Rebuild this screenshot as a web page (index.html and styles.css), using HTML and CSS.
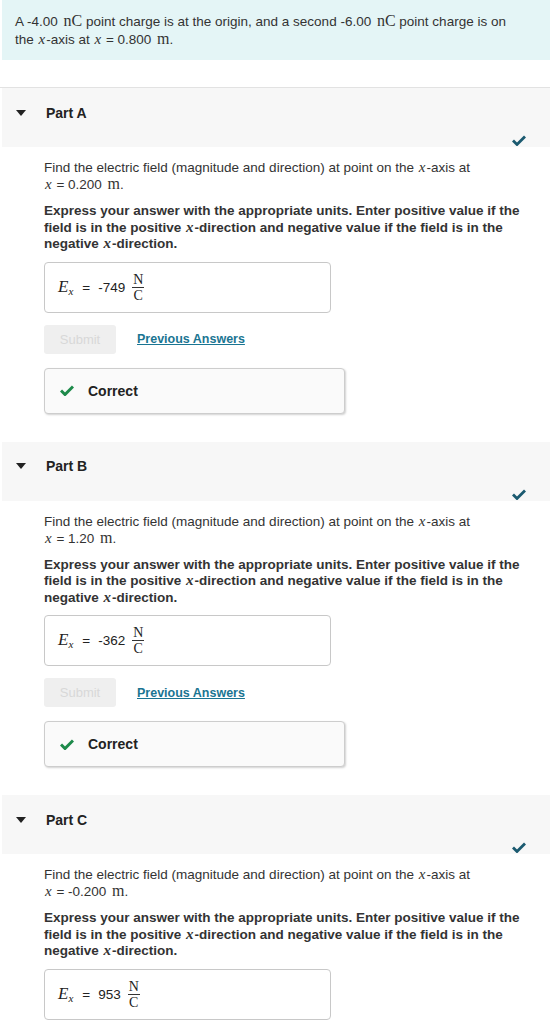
FILE: index.html
```html
<!DOCTYPE html>
<html lang="en">
<head>
  <meta charset="UTF-8" />
  <meta name="viewport" content="width=device-width, initial-scale=1.0" />
  <title>Point charges - electric field</title>
  <link rel="stylesheet" href="styles.css">
</head>
<body>

  <div class="intro">
    A -4.00 <span class="m">nC</span> point charge is at the origin, and a second -6.00 <span class="m">nC</span> point charge is on the <i class="v">x</i>-axis at <span class="nw"><i class="v">x</i> = 0.800 <span class="m">m</span>.</span>
  </div>

  <div class="parts">

    <section class="part">
      <div class="part-head">
        <svg class="caret" width="10" height="6" viewBox="0 0 10 6"><path d="M0 0H10L5 6Z" fill="#222"/></svg>
        <span class="part-title">Part A</span>
        <svg class="done" width="14" height="11" viewBox="0 0 14 11"><path d="M1 5.5L5 9.5L13 1.5" fill="none" stroke="#1b5a70" stroke-width="2.8"/></svg>
      </div>
      <div class="part-body">
        <p class="q">Find the electric field (magnitude and direction) at point on the <i class="v">x</i>-axis at <span class="nw"><i class="v">x</i> = 0.200 <span class="m">m</span>.</span></p>
        <p class="hint">Express your answer with the appropriate units. Enter positive value if the field is in the positive <i class="v">x</i>-direction and negative value if the field is in the negative <i class="v">x</i>-direction.</p>
        <div class="answer">
          <i class="v big">E<sub>x</sub></i> <span class="eq">=</span> -749
          <span class="frac"><span>N</span><span>C</span></span>
        </div>
        <div class="actions">
          <button class="submit" disabled>Submit</button>
          <a class="prev" href="#">Previous Answers</a>
        </div>
        <div class="result">
          <svg width="14" height="11" viewBox="0 0 14 11"><path d="M1 5.5L5 9.5L13 1.5" fill="none" stroke="#1d8a4a" stroke-width="3"/></svg>
          <span>Correct</span>
        </div>
      </div>
    </section>

    <section class="part">
      <div class="part-head">
        <svg class="caret" width="10" height="6" viewBox="0 0 10 6"><path d="M0 0H10L5 6Z" fill="#222"/></svg>
        <span class="part-title">Part B</span>
        <svg class="done" width="14" height="11" viewBox="0 0 14 11"><path d="M1 5.5L5 9.5L13 1.5" fill="none" stroke="#1b5a70" stroke-width="2.8"/></svg>
      </div>
      <div class="part-body">
        <p class="q">Find the electric field (magnitude and direction) at point on the <i class="v">x</i>-axis at <span class="nw"><i class="v">x</i> = 1.20 <span class="m">m</span>.</span></p>
        <p class="hint">Express your answer with the appropriate units. Enter positive value if the field is in the positive <i class="v">x</i>-direction and negative value if the field is in the negative <i class="v">x</i>-direction.</p>
        <div class="answer">
          <i class="v big">E<sub>x</sub></i> <span class="eq">=</span> -362
          <span class="frac"><span>N</span><span>C</span></span>
        </div>
        <div class="actions">
          <button class="submit" disabled>Submit</button>
          <a class="prev" href="#">Previous Answers</a>
        </div>
        <div class="result">
          <svg width="14" height="11" viewBox="0 0 14 11"><path d="M1 5.5L5 9.5L13 1.5" fill="none" stroke="#1d8a4a" stroke-width="3"/></svg>
          <span>Correct</span>
        </div>
      </div>
    </section>

    <section class="part">
      <div class="part-head">
        <svg class="caret" width="10" height="6" viewBox="0 0 10 6"><path d="M0 0H10L5 6Z" fill="#222"/></svg>
        <span class="part-title">Part C</span>
        <svg class="done" width="14" height="11" viewBox="0 0 14 11"><path d="M1 5.5L5 9.5L13 1.5" fill="none" stroke="#1b5a70" stroke-width="2.8"/></svg>
      </div>
      <div class="part-body">
        <p class="q">Find the electric field (magnitude and direction) at point on the <i class="v">x</i>-axis at <span class="nw"><i class="v">x</i> = -0.200 <span class="m">m</span>.</span></p>
        <p class="hint">Express your answer with the appropriate units. Enter positive value if the field is in the positive <i class="v">x</i>-direction and negative value if the field is in the negative <i class="v">x</i>-direction.</p>
        <div class="answer">
          <i class="v big">E<sub>x</sub></i> <span class="eq">=</span> 953
          <span class="frac"><span>N</span><span>C</span></span>
        </div>
      </div>
    </section>

  </div>

</body>
</html>
```

FILE: styles.css
```css
* {
  box-sizing: border-box;
  margin: 0;
  padding: 0;
}

body {
  font-family: 'Liberation Sans', Arial, sans-serif;
  font-size: 13.5px;
  color: #333;
  background: #fff;
}

.nw {
  white-space: nowrap;
}

.intro {
  margin-left: 2px;
  background: #e4f5f6;
  padding: 13px 40px 11px 13px;
  line-height: 18px;
  height: 60px;
}

.m {
  font-family: 'Liberation Serif', 'Times New Roman', serif;
  font-size: 16px;
  line-height: 1;
  margin-left: 2px;
}

.v {
  font-family: 'Liberation Serif', 'Times New Roman', serif;
  font-style: italic;
  font-size: 15px;
  line-height: 1;
  margin: 0 1px 0 1px;
}

.parts {
  margin-top: 27px;
  border-top: 1px solid #e2e2e2;
}

.part-head {
  position: relative;
  margin-left: 2px;
  height: 59px;
  background: #f7f7f7;
  display: flex;
  align-items: center;
  padding-left: 14px;
  padding-bottom: 10px;
}

.caret {
  margin-right: 20px;
}

.part-title {
  font-size: 14px;
  font-weight: bold;
  color: #222;
}

.done {
  position: absolute;
  right: 24px;
  bottom: 1px;
}

.part-body {
  padding: 12px 24px 28px 44px;
}

.q {
  line-height: 17px;
}

.hint {
  margin-top: 10px;
  font-weight: bold;
  line-height: 16.5px;
}

.answer {
  margin-top: 9px;
  width: 287px;
  height: 51px;
  border: 1px solid #c8c8c8;
  border-radius: 4px;
  display: flex;
  align-items: center;
  padding-left: 12px;
  gap: 6px;
  color: #222;
}

.big {
  font-size: 17px;
}

.big sub {
  font-size: 11px;
  vertical-align: -3px;
}

.eq {
  margin: 0 2px;
}

.frac {
  display: inline-flex;
  flex-direction: column;
  align-items: center;
  font-family: 'Liberation Serif', 'Times New Roman', serif;
  font-size: 14px;
  line-height: 13px;
  margin-left: 1px;
}

.frac span:first-child {
  border-bottom: 1px solid #333;
  padding: 0 1px 1px;
}

.frac span:last-child {
  padding-top: 1px;
}

.actions {
  margin-top: 12px;
  display: flex;
  align-items: center;
  gap: 21px;
}

.submit {
  width: 72px;
  height: 29px;
  border: none;
  border-radius: 3px;
  background: #efefef;
  color: #d8d8d8;
  font-family: 'Liberation Sans', Arial, sans-serif;
  font-size: 13px;
}

.prev {
  font-size: 12.5px;
  font-weight: bold;
  color: #1a7592;
}

.result {
  margin-top: 14px;
  width: 301px;
  height: 46px;
  border: 1px solid #cdcdcd;
  border-radius: 4px;
  background: #fafafa;
  box-shadow: 1px 1px 2px rgba(0,0,0,0.18);
  display: flex;
  align-items: center;
  padding-left: 15px;
  gap: 14px;
  font-size: 14px;
  font-weight: bold;
  color: #222;
}
```
